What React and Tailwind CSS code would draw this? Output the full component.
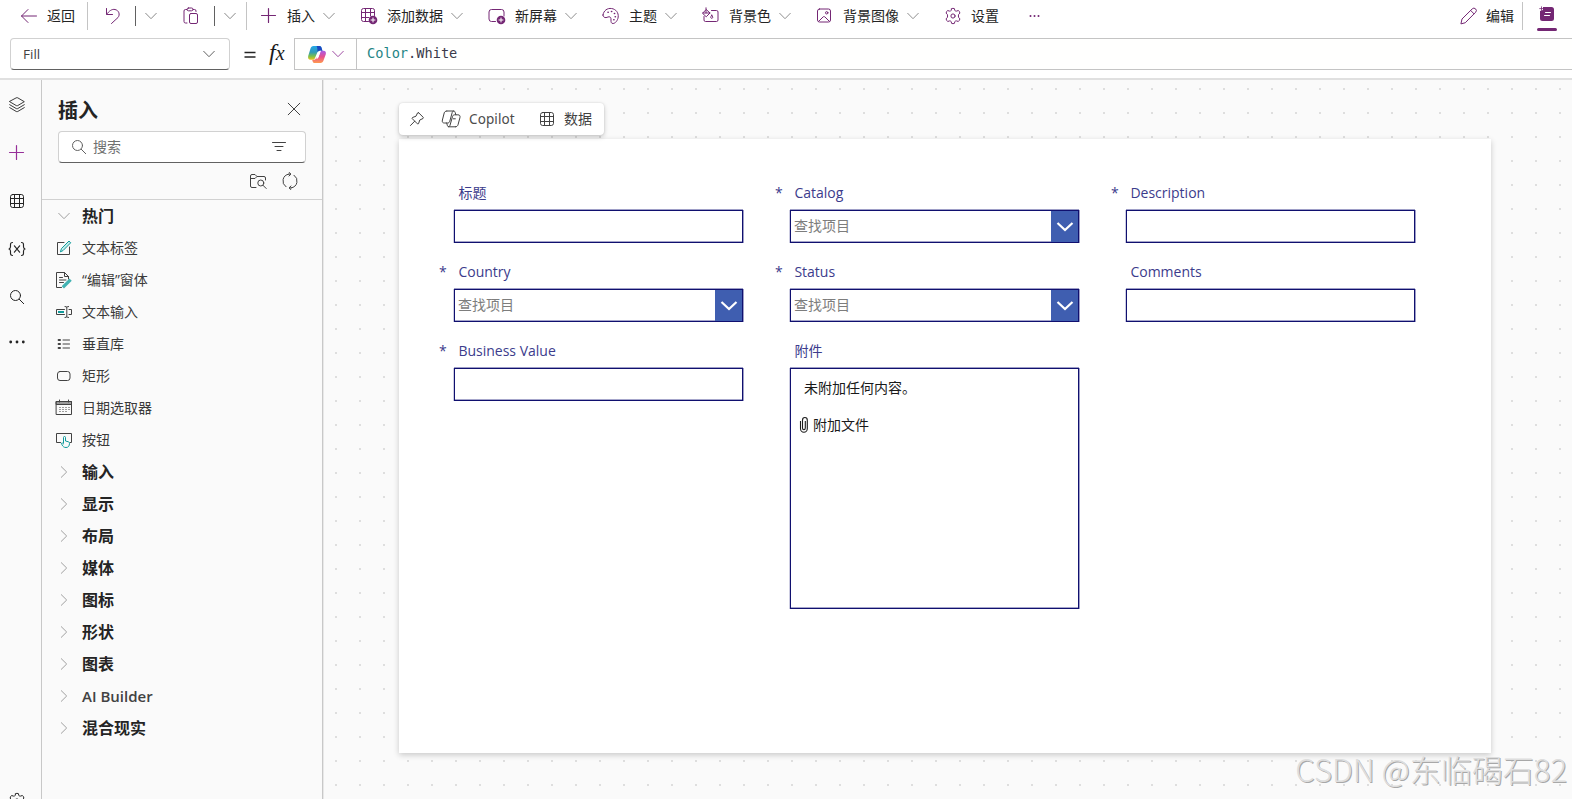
import { clsx } from 'clsx'

function Svg({ size = 18, className, children }) {
  return (
    <svg
      width={size}
      height={size}
      viewBox={`0 0 ${size} ${size}`}
      fill="none"
      stroke="currentColor"
      strokeLinecap="round"
      strokeLinejoin="round"
      className={clsx('shrink-0', className)}
    >
      {children}
    </svg>
  )
}

function Chevron({ className }) {
  return (
    <Svg size={12} className={className}>
      <path d="M.7 3.3 6 8.7l5.3-5.4" />
    </Svg>
  )
}

const GEAR =
  'M7.6 1.6Q9 1 10.4 1.6L10.8 3.5Q11.6 4.2 12.6 4.1L14.4 3.5Q15.7 4.5 15.9 6.1L14.6 7.5Q14.2 9 14.6 10.4L15.9 11.9Q15.6 13.4 14.3 14.5L12.5 13.9Q11.5 13.8 10.8 14.6L10.4 16.4Q9 17 7.6 16.4L7.2 14.6Q6.5 13.8 5.5 13.9L3.7 14.5Q2.4 13.4 2.1 11.9L3.4 10.4Q3.8 9 3.4 7.5L2.1 6.1Q2.4 4.5 3.6 3.5L5.4 4.1Q6.5 4.2 7.2 3.5Z'

function GearIcon({ className }) {
  return (
    <Svg className={className}>
      <path d={GEAR} />
      <circle cx="9" cy="9" r="2.1" />
    </Svg>
  )
}

function TableIcon({ className }) {
  return (
    <Svg size={16} className={className}>
      <rect x="1.5" y="1.5" width="13" height="13" rx="2.2" />
      <path d="M5.5 1.5v13M10.5 1.5v13M1.5 5.5h13M1.5 10.5h13" />
    </Svg>
  )
}

function PlusIcon({ className }) {
  return (
    <Svg className={className}>
      <path d="M8.5 1.5v14M1.5 8.5h14" strokeWidth="1.2" />
    </Svg>
  )
}

function SearchIcon({ className }) {
  return (
    <Svg size={16} className={className}>
      <circle cx="6.5" cy="6.5" r="5" />
      <path d="m10.3 10.3 4.4 4.4" />
    </Svg>
  )
}

function AddBadge() {
  return (
    <>
      <circle cx="13" cy="13" r="4.3" fill="currentColor" stroke="none" />
      <path d="M13 11v4M11 13h4" stroke="white" />
    </>
  )
}

const COMMANDS = [
  { label: '插入', icon: <PlusIcon />, menu: true },
  {
    label: '添加数据',
    icon: (
      <Svg>
        <path d="M8.5 14.5h-5a2 2 0 0 1-2-2v-9a2 2 0 0 1 2-2h9a2 2 0 0 1 2 2v5M1.5 5.5h13M1.5 10.5h7.5M5.5 1.5v13M10.5 1.5v7.5" />
        <AddBadge />
      </Svg>
    ),
    menu: true,
  },
  {
    label: '新屏幕',
    icon: (
      <Svg>
        <path d="M7.5 14.5h-4a2.5 2.5 0 0 1-2.5-2.5v-7a2.5 2.5 0 0 1 2.5-2.5h10a2.5 2.5 0 0 1 2.5 2.5v4" />
        <AddBadge />
      </Svg>
    ),
    menu: true,
  },
  {
    label: '主题',
    icon: (
      <Svg>
        <path d="M1 8C1.5 3.5 5.5.9 9.5 1.5c4.5.6 7.2 4.4 6.7 8.5-.4 3.5-3 6.5-5.2 6.5-1.9 0-2.1-1.7-2-3.5.1-2.2-.5-3.3-2-3.2-1.3 0-2.6 1.2-4 .7C1.7 10.2.9 9.2 1 8Z" />
        <path d="M6 5.2h.2M9.5 4.5h.2M12.4 6.5h.2M13.2 9.8h.2M11.8 12.8h.2" strokeWidth="1.6" />
      </Svg>
    ),
    menu: true,
  },
  {
    label: '背景色',
    icon: (
      <Svg>
        <path d="M9.5 3.5h5A1.5 1.5 0 0 1 16 5v8a1.5 1.5 0 0 1-1.5 1.5h-11A1.5 1.5 0 0 1 2 13V9.5" />
        <path d="M4 .8v5M.8 6l3.4-3.5L8 6 4.500 9.500ZM.8 6H8M9.800 8.200c1 1.500 1.200 2.300.6 2.900-.6.5-1.600.2-1.700-.7 0-.6.4-1.200 1.100-2.200Z" />
      </Svg>
    ),
    menu: true,
  },
  {
    label: '背景图像',
    icon: (
      <Svg>
        <rect x="1.5" y="2" width="13" height="13" rx="2" />
        <path d="m3 14 4-4c.6-.6 1.4-.6 2 0l4 4" />
        <circle cx="10.7" cy="5.8" r="1.2" />
      </Svg>
    ),
    menu: true,
  },
  { label: '设置', icon: <GearIcon /> },
]

function CommandBar() {
  return (
    <div className="flex h-8 items-center text-[14px] text-[#242424]">
      <div className="flex items-center gap-[9px] pl-5">
        <Svg className="text-[#742774]">
          <path d="M16.5 9H1.5M8 2.5 1.5 9 8 15.5" />
        </Svg>
        <span className="pb-0.5">返回</span>
      </div>
      <div className="ml-3 h-7 w-px bg-[#c4c4c4]" />
      <Svg className="ml-4 text-[#742774]">
        <path d="M2.5 1.5v6h6M2.8 7.2C5 4 8 1.8 11 2.5c4 .8 5.3 5.2 3 8L7.5 16.5" />
      </Svg>
      <div className="ml-[13px] h-5 w-px bg-[#616161]" />
      <Chevron className="ml-[9px] text-[#8a8a8a]" />
      <Svg className="ml-[25px] text-[#742774]">
        <path d="M5 2.5H3.5A1.5 1.5 0 0 0 2 4v10.5A1.5 1.5 0 0 0 3.5 16H5M11 2.5h1.5A1.5 1.5 0 0 1 14 4v.5" />
        <rect x="5" y="1" width="6" height="2.8" rx="1.4" />
        <rect x="7.5" y="6.5" width="8" height="10" rx="1.5" />
      </Svg>
      <div className="ml-[14px] h-5 w-px bg-[#616161]" />
      <Chevron className="ml-[9px] text-[#8a8a8a]" />
      <div className="ml-[10px] h-7 w-px bg-[#c4c4c4]" />
      <div className="ml-[13px] flex items-center gap-[26px]">
        {COMMANDS.map(({ label, icon, menu }) => (
          <div key={label} className="flex items-center gap-2">
            <span className="text-[#742774]">{icon}</span>
            <span className="pb-0.5 pl-px -mr-px">{label}</span>
            {menu && <Chevron className="ml-px text-[#8f8f8f] -mr-px" />}
          </div>
        ))}
      </div>
      <Svg size={12} className="ml-[31px] text-[#742774]">
        <path d="M1.5 6h.01M5.5 6h.01M9.5 6h.01" strokeWidth="2" />
      </Svg>
      <div className="ml-auto flex items-center">
        <Svg className="text-[#742774]">
          <path d="M1 16.500 2 12 12.200 1.900a2.300 2.300 0 0 1 3.400 3.400L5.500 15.500ZM10.700 3.500l3.300 3.300" />
        </Svg>
        <span className="ml-2 pb-0.5">编辑</span>
        <div className="ml-2 h-7 w-px bg-[#c4c4c4]" />
        <div className="ml-[14px] mr-[15px] flex h-8 w-5 flex-col items-center justify-between pb-px pt-[6px]">
          <Svg size={16} className="text-[#742774]">
            <path d="M4 1h8.5A2.5 2.5 0 0 1 15 3.5v9a2.5 2.5 0 0 1-2.5 2.5h-9A2.5 2.5 0 0 1 1 12.5V5l3-1Z" fill="currentColor" stroke="none" />
            <path d="M6.5 6.5h5M5.5 9.500h5" stroke="white" />
            <path d="M2.5.8v3.600M.7 2.600h3.600" strokeWidth=".8" />
          </Svg>
          <div className="h-[3px] w-5 rounded-full bg-[#742774]" />
        </div>
      </div>
    </div>
  )
}

function CopilotLogo() {
  return (
    <svg width="20" height="19" viewBox="0 0 20 19" className="shrink-0">
      <defs>
        <linearGradient id="cp-left" x1="0" y1="0" x2="0" y2="1">
          <stop offset="0" stopColor="#25a8e8" />
          <stop offset=".45" stopColor="#2f9bb8" />
          <stop offset=".75" stopColor="#7cc04a" />
          <stop offset="1" stopColor="#f0c419" />
        </linearGradient>
        <linearGradient id="cp-right" x1="0" y1="0" x2="0" y2="1">
          <stop offset="0" stopColor="#a85be8" />
          <stop offset=".5" stopColor="#e8518d" />
          <stop offset="1" stopColor="#ff9a4d" />
        </linearGradient>
      </defs>
      <path d="M6.5 1h6c1.200 0 1.700.7 2 1.800l.9 3c-2.300-.3-4.500-.1-5.200 2L8 13c-.4 1.200-1 1.800-2.200 1.800H3.500C1.500 14.800.7 13.300 1.200 11L3.500 3.500C4 1.900 4.800 1 6.500 1Z" fill="url(#cp-left)" />
      <path d="M9.5 1h3c1.200 0 1.700.7 2 1.800l1 3.200c-2.300-.7-4-.4-4.900 1C10.300 5 10.600 2.500 9.500 1Z" fill="#1b48c0" />
      <path d="M13.500 18H7.600c-1.200 0-1.700-.7-2-1.800l-.4-1.200c2.600.1 3.400-.6 4-2.200 1.800.1 2.300-.8 2.700-2l1.700-5h2.900c2 0 2.800 1.400 2.300 3.500l-2.300 6.300c-.5 1.500-1.300 2.400-3 2.400Z" fill="url(#cp-right)" />
      <path d="M11.600 6.900c.5-.8 1.100-1.100 2.300-1.100l-2.200 6c-.4 1.300-1 2-2.400 2.100Z" fill="white" />
    </svg>
  )
}

function FormulaBar() {
  return (
    <div className="flex h-[46px] items-start pt-1.5">
      <div className="ml-2.5 flex h-8 w-[220px] items-center justify-between rounded-[4px] border border-[#d1d1d1] border-b-[#616161] bg-white pl-3 pr-3.5">
        <span className="pt-px text-[13.5px] text-[#424242]">Fill</span>
        <Chevron className="text-[#616161]" />
      </div>
      <Svg size={14} className="ml-[13px] mt-[9px] text-[#242424]">
        <path d="M1.5 5.5h11M1.5 10h11" strokeWidth="1.5" strokeLinecap="butt" />
      </Svg>
      <span className="ml-3 mt-px w-[25px] font-['Liberation_Serif',serif] text-[24px] italic leading-[26px] text-[#1b1b1b]">
        f<span className="text-[20px]">x</span>
      </span>
      <div className="flex h-8 flex-1 border border-r-0 border-[#c4c4c4] bg-[#fffffe]">
        <div className="flex w-[62px] items-center gap-1 border-r border-[#c4c4c4] pl-3">
          <CopilotLogo />
          <Chevron className="ml-px text-[#a04fa4]" />
        </div>
        <div className="pl-2.5 font-['DejaVu_Sans_Mono',monospace] text-[13.65px] leading-[28px]">
          <span className="text-[#1f8585]">Color</span>
          <span className="text-[#3b3b4b]">.White</span>
        </div>
      </div>
    </div>
  )
}

function LeftRail() {
  return (
    <nav className="relative flex w-[42px] shrink-0 flex-col border-r border-[#c8c8c8] pl-2 pt-px text-[#242424]">
      <div className="flex h-12 items-center">
        <Svg>
          <path d="M8.3 1.8q.7-.4 1.4 0L16.3 5.7 9.7 9.6q-.7.4-1.4 0L1.7 5.7ZM1.7 8.7l6.6 3.9q.7.4 1.4 0l6.6-3.9M1.7 11.6l6.6 3.9q.7.4 1.4 0l6.6-3.9" strokeWidth=".9" />
        </Svg>
      </div>
      <div className="flex h-12 items-center">
        <PlusIcon className="text-[#962f99]" />
      </div>
      <div className="flex h-12 items-center pl-px">
        <TableIcon />
      </div>
      <div className="flex h-12 items-center">
        <Svg>
          <path d="M4.5 2.5c-1.5 0-2 .7-2 2v2.3c0 1.2-.5 1.9-1.5 2.2 1 .3 1.5 1 1.5 2.2v2.3c0 1.3.5 2 2 2M13.5 2.5c1.5 0 2 .7 2 2v2.3c0 1.2.5 1.9 1.5 2.2-1 .3-1.5 1-1.5 2.2v2.3c0 1.3-.5 2-2 2M6.4 5.8l5.2 6.4M11.6 5.8l-5.2 6.4" strokeWidth="1.15" />
        </Svg>
      </div>
      <div className="flex h-12 items-center pl-px">
        <SearchIcon />
      </div>
      <div className="flex h-[42px] items-center">
        <Svg>
          <path d="M2.7 9h.01M9 9h.01M15.3 9h.01" strokeWidth="2.8" />
        </Svg>
      </div>
      <div className="absolute left-2 top-[712px]">
        <GearIcon />
      </div>
    </nav>
  )
}

const TEAL = '#0f9b9b'

const POPULAR = [
  {
    label: '文本标签',
    icon: (
      <>
        <path d="M9 3.5H2.5v12h12V8" strokeLinejoin="miter" />
        <path d="m5.5 12.5 1-3 7.5-7.5 1.7 1.8-7.4 7.5Z" stroke={TEAL} fill="#c4ecea" />
      </>
    ),
  },
  {
    label: '“编辑”窗体',
    icon: (
      <>
        <path d="M6.5 16.5h-5v-15h8l4 4V8M9.5 1.5v4h4M4.5 6.5h3M4.5 9h6.5M4.5 11.5h4" strokeLinejoin="miter" />
        <path d="m9 15.2 5.5-5.5" stroke="#42b3b3" strokeWidth="3.2" strokeLinecap="square" />
      </>
    ),
  },
  {
    label: '文本输入',
    icon: (
      <>
        <path d="M9.5 6.5h-8v5h8M14 6.5h2.5v5H14M11.8 4v10M10 3.5q1.5 0 1.8.9.3-.9 1.8-.9M10 14.5q1.5 0 1.8-.9.3.9 1.8.9" strokeLinejoin="miter" />
        <path d="M3 9h6" stroke={TEAL} strokeWidth="2" strokeLinecap="butt" />
      </>
    ),
  },
  {
    label: '垂直库',
    icon: (
      <path d="M3.5 4.5h2v1h-2ZM3.5 8.5h2v1h-2ZM3.5 12.5h2v1h-2ZM8 5h6.5M8 9h6.5M8 13h6.5" strokeLinejoin="miter" />
    ),
  },
  { label: '矩形', icon: <rect x="2.5" y="4.5" width="12.5" height="9" rx="2.5" /> },
  {
    label: '日期选取器',
    icon: (
      <>
        <path d="M1.5 2.5h15v3h-15Z" fill="#9a9a9a" />
        <path d="M1.5 2.5h15v13h-15ZM4.5 1v2M13.5 1v2" strokeLinejoin="miter" />
        <path d="M4.5 8.5h10M4.5 10.5h10M4.5 12.5h7" strokeDasharray="1 2" strokeLinecap="butt" />
      </>
    ),
  },
  {
    label: '按钮',
    icon: (
      <>
        <path d="M5.5 11.5h-4v-9h15v9H15" strokeLinejoin="miter" />
        <path d="M8.5 12V6.5a1 1 0 0 1 2 0V10l3 .8q1 .3 1 1.5c0 2.8-1.3 4.2-3.5 4.2-2 0-3.2-1-4-2.7l-.7-1.5q.9-.9 2.2.5" stroke={TEAL} fill="#fafafa" />
      </>
    ),
  },
]

const CATEGORIES = ['输入', '显示', '布局', '媒体', '图标', '形状', '图表', 'AI Builder', '混合现实']

function InsertPanel() {
  return (
    <aside className="relative flex w-[281px] shrink-0 flex-col border-r border-[#c8c8c8] shadow-[1px_0_0_#e8e8e8]">
      <div className="flex h-[51px] items-center justify-between pl-4 pr-5 pt-[9px]">
        <h2 className="pt-px text-[20px] font-bold leading-7 text-[#242424]">插入</h2>
        <Svg size={16} className="mb-0.5 text-[#424242]">
          <path d="m2.2 2.2 11.6 11.6M13.8 2.2 2.2 13.8" />
        </Svg>
      </div>
      <div className="mx-4 flex h-8 items-center rounded-[4px] border border-[#d1d1d1] border-b-[#616161] bg-white pl-3">
        <SearchIcon className="text-[#616161]" />
        <span className="ml-[6px] flex-1 pb-0.5 text-[14px] text-[#707070]">搜索</span>
        <Svg size={16} className="mr-[18px] text-[#424242]">
          <path d="M1.5 3.5h13M4 7.5h8M6 11.5h4" />
        </Svg>
      </div>
      <div className="flex h-[37px] items-center justify-end gap-[14px] border-b border-[#d1d1d1] pr-[23px] text-[#424242]">
        <Svg>
          <path d="M7 15.5H3A1.5 1.5 0 0 1 1.5 14V4A1.5 1.5 0 0 1 3 2.5h3l2 2h7A1.5 1.5 0 0 1 16.5 6v2M1.5 6.5h4.5l2-2" />
          <circle cx="11.8" cy="11" r="3" />
          <path d="m14 13.3 3.2 3.2" />
        </Svg>
        <Svg>
          <path d="M7.8 2.1A7 7 0 0 0 5 14.8M10.2 15.9A7 7 0 0 0 13 3.2M10.2 15.9H9M7.8 2.1H9M8 .3l2 1.8-2 1.9M10 14l-2 1.9 2 1.8" />
        </Svg>
      </div>
      <ul>
        <li className="flex h-8 items-center pl-4">
          <Chevron className="text-[#a0a0a0]" />
          <span className="ml-3 text-[16px] font-semibold text-[#242424]">热门</span>
        </li>
        {POPULAR.map(({ label, icon }) => (
          <li key={label} className="flex h-8 items-center pl-[13px]">
            <Svg className="text-[#424242]">{icon}</Svg>
            <span className="ml-[9px] pb-0.5 text-[14px] text-[#3a3a3a]">{label}</span>
          </li>
        ))}
        {CATEGORIES.map((label) => (
          <li key={label} className="flex h-8 items-center pl-4">
            <Chevron className="-rotate-90 text-[#a0a0a0]" />
            <span
              className={clsx(
                'ml-3',
                label === 'AI Builder'
                  ? 'text-[15px] font-semibold text-[#424242]'
                  : 'text-[16px] font-semibold text-[#242424]',
              )}
            >
              {label}
            </span>
          </li>
        ))}
      </ul>
    </aside>
  )
}

function SelectionToolbar() {
  return (
    <div className="relative flex h-8 w-[205px] items-center rounded-[4px] bg-white text-[14px] text-[#424242] shadow-[0_2px_5px_rgba(0,0,0,0.2),0_0_2px_rgba(0,0,0,0.12)]">
      <Svg size={16} className="ml-[10px]">
        <path d="M9.7 1.8 14.2 6.3Q14.7 7 14 7.5L10.8 9 9.5 12.7Q9 13.4 8.4 12.8L3.2 7.6Q2.7 7 3.5 6.5L7 5.2 8.5 2Q9.1 1.3 9.7 1.8ZM5.7 10.2 1.5 14.5" />
      </Svg>
      <Svg size={20} className="ml-4">
        <path d="M5.8 2h6.7c1 0 1.5.6 1.7 1.5l.6 2.2M5.8 2C4.4 2 3.6 2.8 3.2 4L1.4 11c-.5 2 .3 3 2 3h3.2c1.2 0 1.9-.6 2.2-1.8L11.200 3.500c.3-.9.7-1.500 1.500-1.500M14.500 17.800H8c-1 0-1.500-.6-1.700-1.500L5.700 14M14.500 17.800c1.300 0 2.100-.8 2.500-2l1.900-7c.5-2-.3-3-2-3h-3.200c-1.200 0-1.900.6-2.200 1.800l-2.500 8.700c-.3.9-.7 1.500-1.500 1.500M12.300 9.800h2" />
      </Svg>
      <span className="ml-2 w-[46px] pt-px font-['Noto_Sans'] text-[13.5px] tracking-[0.1px] text-[#4c4c4c]">Copilot</span>
      <TableIcon className="ml-6" />
      <span className="ml-[9px] pb-0.5">数据</span>
    </div>
  )
}

// Navy line with a soft edge, heavier towards the bottom right.
const BOX =
  'mr-px mt-px border border-[#10106f] shadow-[inset_0_-1px_0_rgba(0,0,107,0.35),0_-1px_0_rgba(0,0,107,0.38),1px_0_0_rgba(0,0,107,0.38),-1px_0_0_rgba(0,0,107,0.2)]'

function TextBox() {
  return <div className={clsx(BOX, 'h-[33px]')} />
}

function LookupBox() {
  return (
    <div className={clsx(BOX, 'flex h-[33px] items-center')}>
      <span className="flex-1 pb-[3px] pl-[3px] text-[14px] text-[#7d7d7d]">查找项目</span>
      <div className="flex h-full w-[27px] items-center justify-center bg-[#3f5eb0] text-white">
        <Svg size={18}>
          <path d="m1.5 5 7.5 7 7.5-7" strokeWidth="2.2" strokeLinecap="butt" strokeLinejoin="miter" />
        </Svg>
      </div>
    </div>
  )
}

function Attachments() {
  return (
    <div className={clsx(BOX, 'h-[241px] text-[14px] text-[#1a1a1a]')}>
      <p className="pl-[13px] pt-[9px] leading-5">未附加任何内容。</p>
      <div className="mt-[17px] flex items-center gap-1 pl-[8px] leading-5">
        <svg width="10" height="18" viewBox="0 0 10 18" fill="none" stroke="currentColor" strokeWidth="1.1">
          <path d="M1.5 5v7.5a3.4 3.8 0 0 0 6.8 0V4.2a2.4 2.7 0 0 0-4.8 0V12a1.4 1.7 0 0 0 2.8 0V5" />
        </svg>
        <span>附加文件</span>
      </div>
    </div>
  )
}

const FIELDS = [
  { label: '标题', Control: TextBox },
  { label: 'Catalog', required: true, Control: LookupBox },
  { label: 'Description', required: true, Control: TextBox },
  { label: 'Country', required: true, Control: LookupBox },
  { label: 'Status', required: true, Control: LookupBox },
  { label: 'Comments', Control: TextBox },
  { label: 'Business Value', required: true, Control: TextBox },
  { label: '附件', Control: Attachments },
]

function Screen() {
  return (
    <div className="h-[614px] w-[1092px] bg-white pl-[37px] pt-9 shadow-[0_2px_6px_rgba(0,0,0,0.2)]">
      <div className="grid w-[1008px] grid-cols-[repeat(3,336px)] grid-rows-[79px_79px_auto]">
        {FIELDS.map(({ label, required, Control }) => (
          <div key={label} className="flex w-[308px] flex-col pl-[18px]">
            <div className="-ml-[18px] flex h-[34px] items-center pt-px text-[14px] text-[#3c3c8c]">
              <span className="w-[22.4px] pl-[3px]">{required && '*'}</span>
              <span>{label}</span>
            </div>
            <Control />
          </div>
        ))}
      </div>
    </div>
  )
}

export default function App() {
  return (
    <div className="relative flex h-[799px] w-[1572px] flex-col overflow-hidden bg-white font-['Open_Sans','Noto_Sans_CJK_SC',sans-serif]">
      <header className="h-20 shrink-0 border-b-2 border-[#e0e0e0]">
        <CommandBar />
        <FormulaBar />
      </header>
      <div className="flex min-h-0 flex-1 bg-[#fafafa]">
        <LeftRail />
        <InsertPanel />
        <main className="flex-1 bg-[conic-gradient(at_2px_2px,transparent_75%,#dedede_0)] bg-[length:24px_24px] bg-[position:12px_8px] pl-[76px] pt-[23px]">
          <SelectionToolbar />
          <div className="pt-1">
            <Screen />
          </div>
        </main>
      </div>
      <div className="absolute bottom-[7px] right-[5px] whitespace-nowrap font-['Noto_Sans_CJK_SC',sans-serif] text-[31px] font-light leading-[46px] text-[#dedede] [text-shadow:1px_1px_0_#a8a8a8]">
        CSDN @东临碣石82
      </div>
    </div>
  )
}
